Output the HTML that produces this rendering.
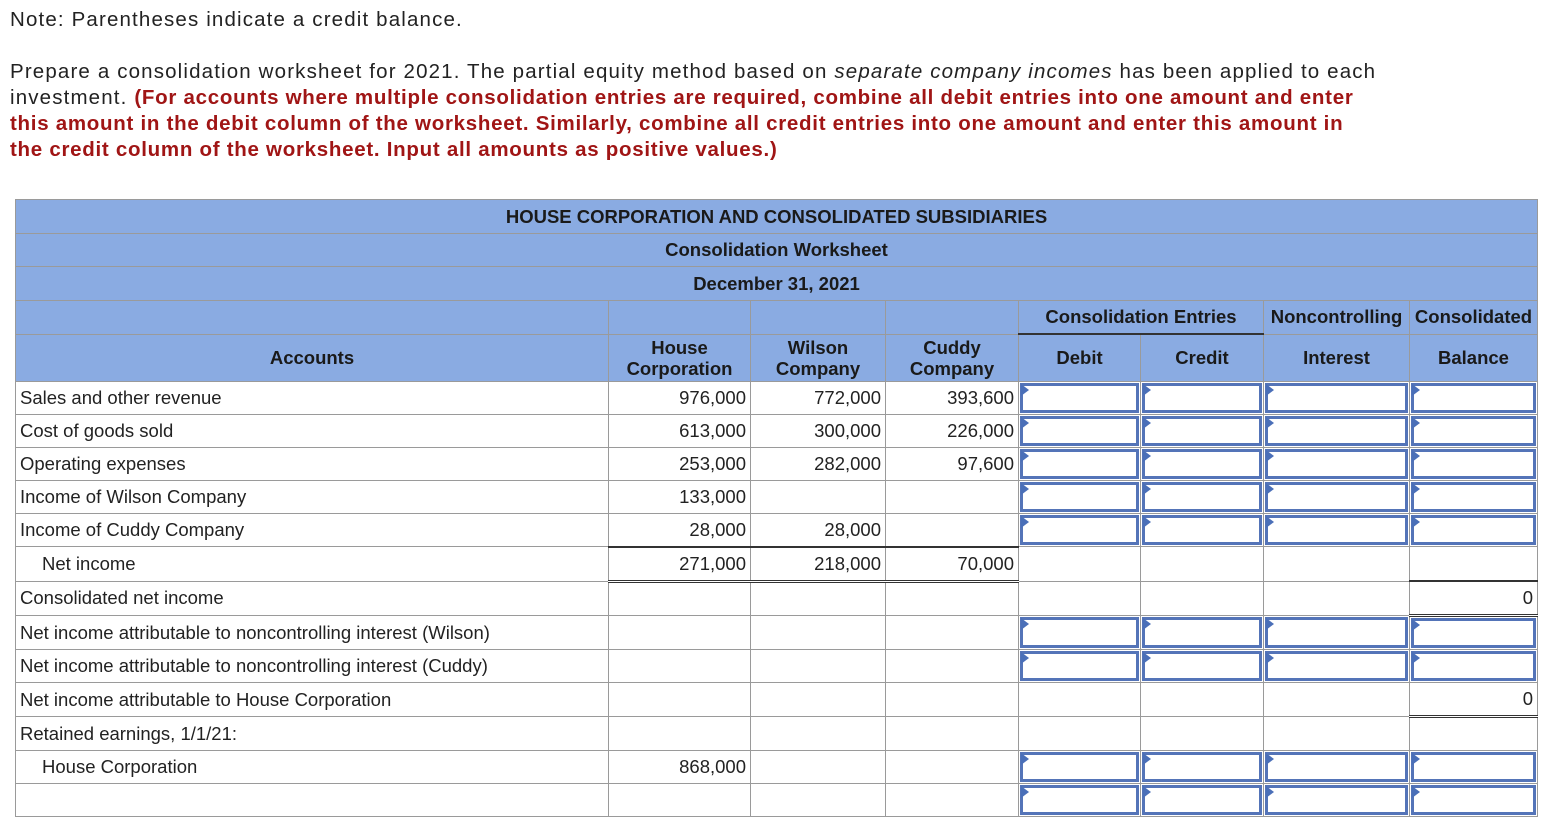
<!DOCTYPE html>
<html><head><style>
body{margin:0;background:#fff;font-family:"Liberation Sans",Arial,sans-serif;color:#222;width:1560px;height:786px;overflow:hidden;position:relative}
.p{position:absolute;left:10px;font-size:20.5px;line-height:26px;white-space:nowrap;letter-spacing:1.15px}
.r{color:#a01515;font-weight:bold;letter-spacing:0.72px}
table{position:absolute;left:15px;top:199px;border-collapse:collapse;table-layout:fixed;font-size:18.5px}
td{border:1px solid #9a9a9a;padding:0 4px;height:32px;overflow:hidden;white-space:nowrap;position:relative}
.h td{background:#8aabe2;font-weight:bold;text-align:center;color:#1a1a1a}
.n{text-align:right}
.in{padding:0}
.in div{position:absolute;left:1px;right:1px;top:1px;bottom:1px;border:3px solid #5474b8}
.in div:before{content:"";position:absolute;left:-2px;top:-2px;border-left:8px solid #4a6fb8;border-top:6px solid transparent;border-bottom:6px solid transparent}
.ind{padding-left:26px}
.dbl{border-bottom:3px double #333}
.tp{border-top:2px solid #333}
</style></head><body>
<div class="p" style="top:7px">Note: Parentheses indicate a credit balance.</div>
<div class="p" style="top:59px">Prepare a consolidation worksheet for 2021. The partial equity method based on <i>separate company incomes</i> has been applied to each<br>investment. <span class="r">(For accounts where multiple consolidation entries are required, combine all debit entries into one amount and enter<br>this amount in the debit column of the worksheet. Similarly, combine all credit entries into one amount and enter this amount in<br>the credit column of the worksheet. Input all amounts as positive values.)</span></div>
<table>
<colgroup><col style="width:593px"><col style="width:142px"><col style="width:135px"><col style="width:133px"><col style="width:122px"><col style="width:123px"><col style="width:146px"><col style="width:128px"></colgroup>
<tr class="h"><td colspan="8" style="height:33px">HOUSE CORPORATION AND CONSOLIDATED SUBSIDIARIES</td></tr>
<tr class="h"><td colspan="8" style="height:32px">Consolidation Worksheet</td></tr>
<tr class="h"><td colspan="8" style="height:33px">December 31, 2021</td></tr>
<tr class="h"><td></td><td></td><td></td><td></td><td colspan="2" style="border-bottom:2px solid #333">Consolidation Entries</td><td style="padding:0">Noncontrolling</td><td style="padding:0">Consolidated</td></tr>
<tr class="h" style="line-height:21px"><td style="height:46px">Accounts</td><td>House<br>Corporation</td><td>Wilson<br>Company</td><td>Cuddy<br>Company</td><td>Debit</td><td>Credit</td><td>Interest</td><td>Balance</td></tr>
<tr><td>Sales and other revenue</td><td class="n">976,000</td><td class="n">772,000</td><td class="n">393,600</td><td class="in"><div></div></td><td class="in"><div></div></td><td class="in"><div></div></td><td class="in"><div></div></td></tr>
<tr><td>Cost of goods sold</td><td class="n">613,000</td><td class="n">300,000</td><td class="n">226,000</td><td class="in"><div></div></td><td class="in"><div></div></td><td class="in"><div></div></td><td class="in"><div></div></td></tr>
<tr><td>Operating expenses</td><td class="n">253,000</td><td class="n">282,000</td><td class="n">97,600</td><td class="in"><div></div></td><td class="in"><div></div></td><td class="in"><div></div></td><td class="in"><div></div></td></tr>
<tr><td>Income of Wilson Company</td><td class="n">133,000</td><td></td><td></td><td class="in"><div></div></td><td class="in"><div></div></td><td class="in"><div></div></td><td class="in"><div></div></td></tr>
<tr><td>Income of Cuddy Company</td><td class="n">28,000</td><td class="n">28,000</td><td></td><td class="in"><div></div></td><td class="in"><div></div></td><td class="in"><div></div></td><td class="in"><div></div></td></tr>
<tr><td class="ind" style="height:30px">Net income</td><td class="n tp dbl">271,000</td><td class="n tp dbl">218,000</td><td class="n tp dbl">70,000</td><td></td><td></td><td></td><td></td></tr>
<tr><td style="height:31px">Consolidated net income</td><td></td><td></td><td></td><td></td><td></td><td></td><td class="n tp dbl">0</td></tr>
<tr><td>Net income attributable to noncontrolling interest (Wilson)</td><td></td><td></td><td></td><td class="in"><div></div></td><td class="in"><div></div></td><td class="in"><div></div></td><td class="in"><div></div></td></tr>
<tr><td>Net income attributable to noncontrolling interest (Cuddy)</td><td></td><td></td><td></td><td class="in"><div></div></td><td class="in"><div></div></td><td class="in"><div></div></td><td class="in"><div></div></td></tr>
<tr><td style="height:31px">Net income attributable to House Corporation</td><td></td><td></td><td></td><td></td><td></td><td></td><td class="n dbl">0</td></tr>
<tr><td>Retained earnings, 1/1/21:</td><td></td><td></td><td></td><td></td><td></td><td></td><td></td></tr>
<tr><td class="ind">House Corporation</td><td class="n">868,000</td><td></td><td></td><td class="in"><div></div></td><td class="in"><div></div></td><td class="in"><div></div></td><td class="in"><div></div></td></tr>
<tr><td>&nbsp;</td><td></td><td></td><td></td><td class="in"><div></div></td><td class="in"><div></div></td><td class="in"><div></div></td><td class="in"><div></div></td></tr>
</table>
</body></html>
